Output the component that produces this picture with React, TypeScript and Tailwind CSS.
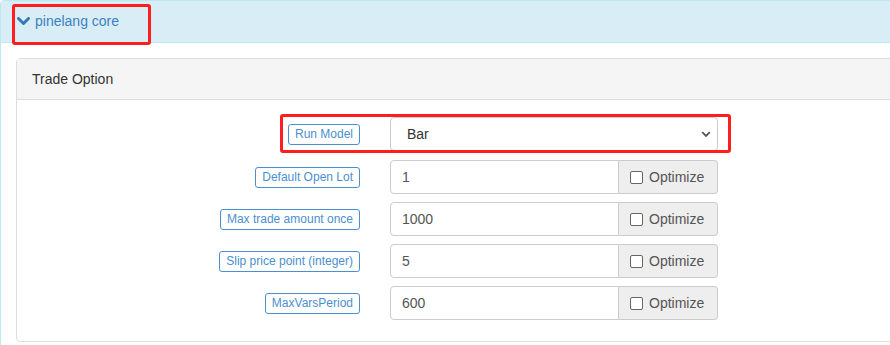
const rows = [
  { label: "Default Open Lot", value: "1" },
  { label: "Max trade amount once", value: "1000" },
  { label: "Slip price point (integer)", value: "5" },
  { label: "MaxVarsPeriod", value: "600" },
];

const Badge = ({ text }: { text: string }) => (
  <span className="inline-flex items-center h-[21px] px-[6px] border border-[#4a8fcf] rounded-[3px] text-[12px] text-[#4a8fcf] leading-none">
    {text}
  </span>
);

const App = () => {
  return (
    <div className="relative w-[890px] h-[345px] overflow-hidden bg-white font-['Liberation_Sans',Arial,sans-serif] text-[14px]">
      <div className="w-[940px] border border-[#bce8f1] rounded-tl-[4px]">
        <div className="flex items-center h-[42px] bg-[#d9edf7] border-b border-[#bce8f1] pl-[16px] gap-[5px]">
          <svg width="13" height="9" viewBox="0 0 13 9" className="mt-[-1px]">
            <path d="M1.5 1.5 L6.5 6.5 L11.5 1.5" fill="none" stroke="#337ab7" strokeWidth="3" strokeLinecap="round" strokeLinejoin="round" />
          </svg>
          <span className="text-[#3c80c2]">pinelang core</span>
        </div>

        <div className="p-[15px] pr-0">
          <div className="border border-[#ddd] rounded-[4px] h-[284px]">
            <div className="flex items-center h-[41px] bg-[#f5f5f5] border-b border-[#ddd] pl-[15px] text-[#333]">
              Trade Option
            </div>
            <div className="pt-[17px]">
              <div className="flex items-center mb-[9px]">
                <div className="w-[343px] flex justify-end">
                  <Badge text="Run Model" />
                </div>
                <div className="ml-[30px] w-[328px] h-[34px] border border-[#ccc] rounded-[4px] flex items-center justify-between pl-[16px] pr-[6px] text-[#333]">
                  <span>Bar</span>
                  <svg width="10" height="7" viewBox="0 0 10 7">
                    <path d="M1.2 1.2 L5 5 L8.8 1.2" fill="none" stroke="#555" strokeWidth="1.8" />
                  </svg>
                </div>
              </div>

              {rows.map((r) => (
                <div key={r.label} className="flex items-center mb-[8px]">
                  <div className="w-[343px] flex justify-end">
                    <Badge text={r.label} />
                  </div>
                  <div className="ml-[30px] flex h-[34px]">
                    <div className="w-[229px] border border-[#ccc] rounded-l-[4px] flex items-center pl-[11px] text-[#555]">
                      {r.value}
                    </div>
                    <div className="w-[99px] border border-l-0 border-[#ccc] rounded-r-[4px] bg-[#eee] flex items-center pl-[11px] gap-[6px] text-[#555]">
                      <span className="w-[13px] h-[13px] border border-[#666] rounded-[2px] bg-white" />
                      <span>Optimize</span>
                    </div>
                  </div>
                </div>
              ))}
            </div>
          </div>
        </div>
      </div>

      <div className="absolute left-[12px] top-[4px] w-[139px] h-[41px] border-[3px] border-[#ff1d1d] rounded-[3px]" />
      <div className="absolute left-[280px] top-[114px] w-[451px] h-[39px] border-[3px] border-[#ff1d1d] rounded-[3px]" />
    </div>
  );
};

export default App;
